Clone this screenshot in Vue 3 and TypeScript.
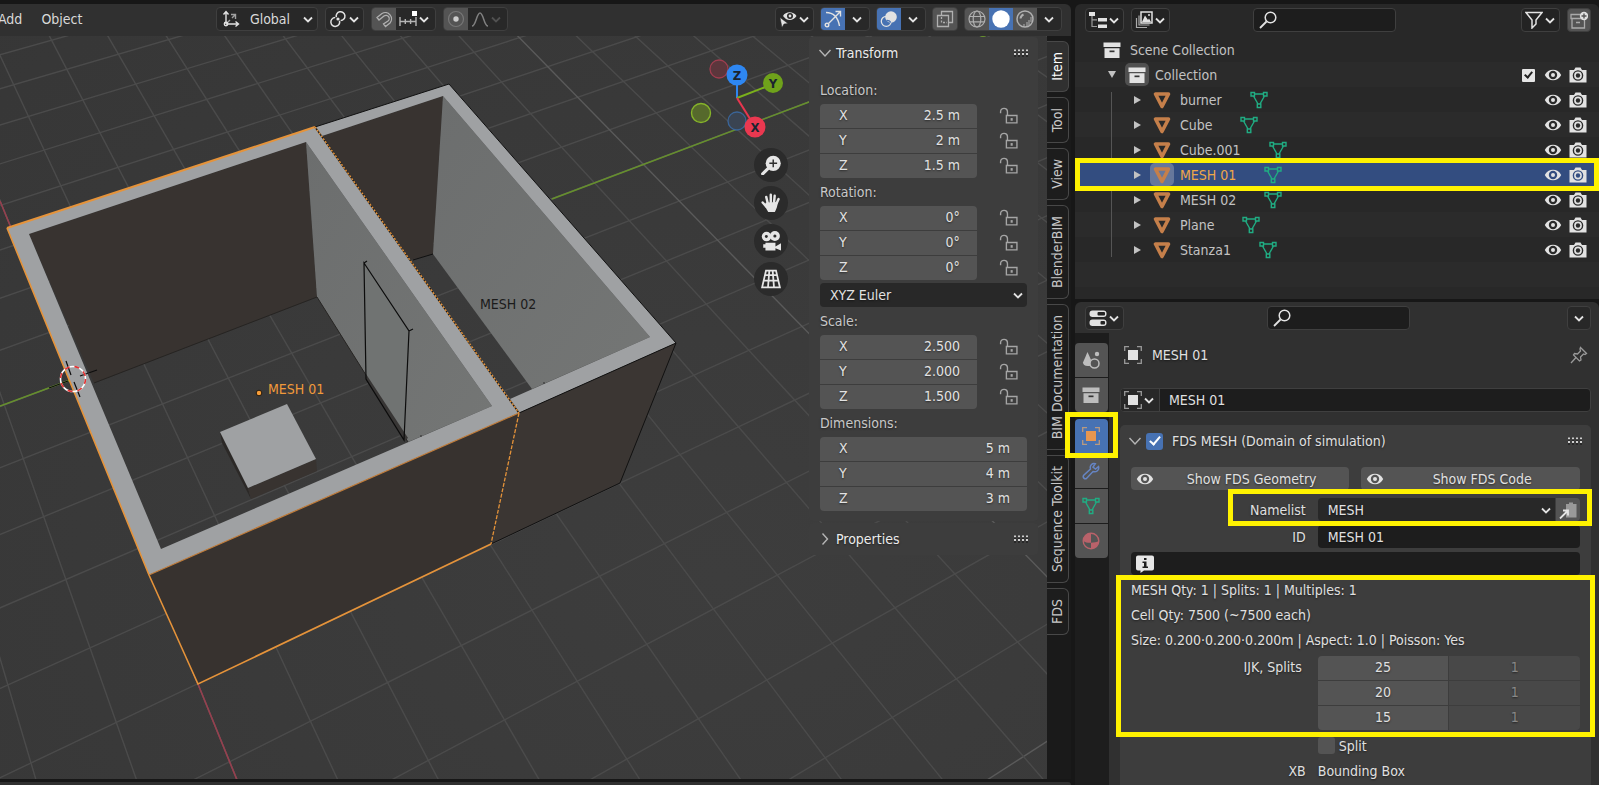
<script setup lang="ts">
import { ref } from 'vue'

const icons: Record<string, string> = {
  chevron: '<path d="M5 7.5l4 4 4-4" fill="none" stroke="currentColor" stroke-width="1.8"/>',
  open: '<path d="M3.500 6l5.500 6 5.500-6" fill="none" stroke="#b5b5b5" stroke-width="1.400"/>',
  closed: '<path d="M6.500 3.500l5 5.500-5 5.500" fill="none" stroke="#b5b5b5" stroke-width="1.400"/>',
  axes: '<g fill="none" stroke="currentColor" stroke-width="1.400"><path d="M4 14V2M1.500 4.500L4 1.500l2.500 3M4 14h12M13.500 11.500l3 2.500-3 2.500"/><path d="M5 13l3-3M10 8l3-3M9 4.500h4.500V9" opacity=".65"/><circle cx="4" cy="14" r="1.700"/></g>',
  pivot: '<g fill="none" stroke="currentColor" stroke-width="1.500"><path d="M7.300 7.300a4.400 4.400 0 1 1 4.400 3.200"/><path d="M10.500 10.800a4.400 4.400 0 1 1-4.400-3.200"/></g><circle cx="9" cy="9" r="1.600" fill="currentColor"/>',
  magnet: '<path d="M2 7.500l5-4a6.300 6.300 0 0 1 8 9.500l-4.500 3.500-2-2.500L13 11a3.200 3.200 0 0 0-4-5L4 10z" fill="none" stroke="currentColor" stroke-width="1.300"/>',
  snap: '<path d="M1 7v9M6.300 9v5M11.600 9v5M17 7v9M1 11.500h16" fill="none" stroke="#b5b5b5" stroke-width="1.400"/><path d="M13 1h5v5h-5z" fill="#fff"/>',
  proportional: '<circle cx="9" cy="9" r="7.500" fill="none" stroke="#777" stroke-width="1.200"/><circle cx="9" cy="9" r="2.700" fill="#ccc"/>',
  falloff: '<path d="M1 16c4 0 4.500-13 8-13s4 13 8 13" fill="none" stroke="currentColor" stroke-width="1.500"/>',
  visibility: '<path d="M4 6c2.500-5 10.500-5 13.500 0-3 5-10 5-12.500 1z" fill="currentColor"/><circle cx="11" cy="6" r="3" fill="#282828"/><circle cx="11" cy="6" r="1.400" fill="currentColor"/><path d="M1 7.500l8 6-4 .5-2 3.500z" fill="currentColor" stroke="#282828" stroke-width=".5"/>',
  gizmo: '<g fill="none" stroke="currentColor" stroke-width="1.400"><path d="M2 2.500c7 0 12 5 13.500 13.500M4.500 13.500L16 2M11.500 1.500H16.500V6.500"/><circle cx="3" cy="15" r="1.800"/></g>',
  overlay: '<circle cx="11" cy="7" r="5.800" fill="currentColor"/><circle cx="6.300" cy="11.300" r="5" fill="none" stroke="currentColor" stroke-width="1.300"/><path d="M6.500 10.500a5 5 0 0 1 4.500 2" fill="none" stroke="#4772b3" stroke-width="1.200"/>',
  xray: '<g fill="none" stroke="currentColor" stroke-width="1.300"><path d="M1.500 5.500h11v11h-11zM5.500 5V1.500h11v11H13"/><path d="M5.500 7v5.500H11" stroke-dasharray="2 1.500"/></g>',
  wire: '<g fill="none" stroke="currentColor" stroke-width="1.200"><circle cx="9" cy="9" r="8"/><ellipse cx="9" cy="9" rx="3.800" ry="8"/><path d="M1.500 6.500h15M1.500 11.800h15"/></g>',
  solid: '<circle cx="9" cy="9" r="8.700" fill="#fff"/>',
  rendered: '<circle cx="9" cy="9" r="8" fill="none" stroke="currentColor" stroke-width="1.500"/><path d="M4.500 8.500a5 5 0 0 1 3-4" fill="none" stroke="currentColor" stroke-width="2"/><path d="M15 7v5M13 10v5M11 12v4M8 14v2.500" stroke="currentColor" stroke-width="1"/>',
  tree: '<path d="M0 1h6v4H0zM9 7h9v3.500H9zM9 13.500h9V17H9z" fill="currentColor"/><path d="M3 5v10.500h5M3 8.800h5" fill="none" stroke="#999" stroke-width="1.200"/>',
  images: '<path d="M1.500 7v9.500H12M4 4.500v9.500h10.500" fill="none" stroke="#aaa" stroke-width="1.200"/><path d="M6 1h11v11H6z" fill="none" stroke="currentColor" stroke-width="1.500"/><path d="M7 11l3-6.500L13 9l1-1.500 2 3.500z" fill="currentColor"/><circle cx="14" cy="4" r="1" fill="currentColor"/>',
  search: '<circle cx="11.500" cy="6.500" r="5.300" fill="none" stroke="currentColor" stroke-width="1.500"/><path d="M7.500 10.500L1 17" stroke="currentColor" stroke-width="1.800"/>',
  filter: '<path d="M1 1.500h16l-6 7.500v4l-4 4V9z" fill="none" stroke="currentColor" stroke-width="1.500"/>',
  newcoll: '<path d="M10 3.500H1v4h11M2 8v9h12.500V9M6 11.500h4" fill="none" stroke="#aaa" stroke-width="1.300"/><circle cx="14" cy="5" r="4.200" fill="#e0e0e0"/><path d="M14 2.500v5M11.500 5h5" stroke="#545454" stroke-width="1.400"/>',
  box: '<path d="M.5 1.500h17v4.500H.5zM1.500 7.300h15V17h-15z" fill="currentColor"/><path d="M6.500 9.500h5v1.700h-5z" fill="#333"/>',
  mesh: '<path d="M2.500 3h13L9 15.500z" fill="none" stroke="#c57f4a" stroke-width="3.600" stroke-linejoin="round"/>',
  data: '<g fill="none" stroke="#20ad83" stroke-width="1.400"><path d="M1 1.500h3.500V5H1zM13.500 1.500H17V5h-3.500zM7.300 13h3.500v3.500H7.300zM4.500 3h9M3.500 5l4.500 8M14.500 5L10 13"/></g>',
  eye: '<path d="M.8 9C4 2 14 2 17.200 9 14 16 4 16 .8 9z" fill="currentColor"/><circle cx="9" cy="9" r="4.200" fill="var(--hole,#2a2a2a)"/><circle cx="9" cy="9" r="2" fill="currentColor"/>',
  camera: '<path d="M.5 4H5l1.500-2.500h5L13 4h4.500v12.500H.5z" fill="currentColor"/><circle cx="9" cy="9.500" r="4.600" fill="none" stroke="var(--hole,#2a2a2a)" stroke-width="1.400"/><circle cx="9" cy="9.500" r="2.200" fill="var(--hole,#2a2a2a)"/>',
  toggles: '<rect x=".5" y="1.500" width="17" height="6.500" rx="3" fill="currentColor"/><rect x="8.500" y="3" width="7.500" height="3.500" rx="1" fill="#222"/><rect x=".5" y="10.500" width="17" height="6.500" rx="3" fill="currentColor"/><rect x="11.500" y="12" width="4.500" height="3.500" rx="1" fill="#222"/>',
  object: '<path d="M.7 5V.7H5M13 .7h4.300V5M17.300 13v4.300H13M5 17.300H.7V13" fill="none" stroke="var(--frame,#999)" stroke-width="1.300"/><path d="M4 4h10v10H4z" fill="currentColor"/>',
  pin: '<path d="M10.500 1.500l6 6-1.500 1-1.500-.5-3 3 .5 3-1.500 1L3.500 9 4.500 7.500l3 .5 3-3-.5-2zM6 11.500L1 17" fill="none" stroke="currentColor" stroke-width="1.300"/>',
  scene: '<path d="M5.500 1L10 11a4 4 0 0 1-1 3.500C4 16 .8 14 1 11.500z" fill="currentColor"/><circle cx="15" cy="3" r="2.200" fill="currentColor"/><circle cx="12.500" cy="12.500" r="4.500" fill="#545454" stroke="currentColor" stroke-width="1.500"/>',
  wrench: '<path d="M16.500 4.500l-3 2.500-2.500-2 2.300-3.300C10 .8 7.500 3.500 8.500 7L1.500 13.500c-1 2 1 4 3 3L11 9.500c3.500 1 6.500-1.500 5.500-5z" fill="none" stroke="#6685c4" stroke-width="1.500"/>',
  material: '<circle cx="9" cy="9" r="7.800" fill="none" stroke="#b9626a" stroke-width="1.400"/><path d="M9 1.200A7.800 7.800 0 0 0 1.200 9c2 1.500 5 2 7.800 1.800zM9 10.800c3-.2 6-.8 7.800-1.800A7.800 7.800 0 0 1 9 16.800z" fill="#b9626a"/>',
  info: '<path d="M2 .5h14a2 2 0 0 1 2 2v11a2 2 0 0 1-2 2H8L4.500 18v-2.500H2a2 2 0 0 1-2-2v-11a2 2 0 0 1 2-2z" fill="#e6e6e6"/><path d="M8 3h2.500v2H8zM6.500 6.500h4v5H12V13H6.500v-1.500H8V8H6.500z" fill="#1d1d1d"/>',
  paste: '<path d="M7 3h3V1.500h4V3h3.500v13.500H7z" fill="#999"/><path d="M1 17.500l7-7M4 9.500h5v5" fill="none" stroke="#e6e6e6" stroke-width="1.800"/>',
  lock: '<path d="M1.500 6V4.500a3 3 0 0 1 6.500 0V8M7 8h10v7H7z" fill="none" stroke="#a5a5a5" stroke-width="1.300"/><path d="M11 10.500h2V13h-2z" fill="#a5a5a5"/>',
  zoom: '<circle cx="11" cy="7.500" r="6.800" fill="currentColor"/><path d="M6.500 12L1.500 17" stroke="currentColor" stroke-width="2.800" stroke-linecap="round"/><path d="M11 4v7M7.500 7.500h7" stroke="#2d2d2d" stroke-width="1.300"/>',
  hand: '<g fill="none" stroke="currentColor" stroke-linecap="round" stroke-width="2.200"><path d="M6 9L4.700 3.500M8.800 8V1.600M11.800 8l.5-5.500M14 9.500l1.800-4M5 12.500L1.500 8.500"/></g><path d="M4.500 8.500L15 8c0 3.500-1 6-2.500 9h-6L3 11z" fill="currentColor"/>',
  movie: '<circle cx="5" cy="5" r="4.300" fill="currentColor"/><circle cx="12.500" cy="4.500" r="4.500" fill="currentColor"/><circle cx="4.800" cy="5" r="1.300" fill="#2d2d2d"/><circle cx="12.500" cy="4.500" r="1.400" fill="#2d2d2d"/><path d="M4 10.500h9v7H4zM2 12h2v3H2zM13 14l5-3v6.500l-5-2z" fill="currentColor"/>',
  persp: '<path d="M4.500 1.500h9l3.500 15H1zM3.500 5.500h11M2.500 10.500h13M7.500 1.500L6.300 16.500M10.500 1.500l1.200 15" fill="none" stroke="currentColor" stroke-width="1.600"/>',
  dots: '<path d="M2 6.500h15M2 10h15" stroke="#cfcfcf" stroke-width="2" stroke-dasharray="2 2"/><path d="M2 8h15M2 12h15" stroke="#151515" stroke-width="1" stroke-dasharray="2 2"/>'
}

interface Pt { x: number; y: number }

// Perspective projection of the ground plane onto the viewport.
function ground(x: number, y: number): Pt {
  const w = 1 - 0.03637 * x + 0.018292 * y
  return {
    x: (17.763 * x + 68.797 * y + 73) / w,
    y: (36.08 * x - 18.465 * y + 379) / w
  }
}

function range(from: number, to: number): number[] {
  return Array.from({ length: to - from + 1 }, (_, i) => from + i)
}

const gridLines = [
  ...range(-16, 12).map((x) => ({ a: ground(x, -8), b: ground(x, 40), major: x % 10 === 0 })),
  ...range(-8, 36).map((y) => ({ a: ground(-18, y), b: ground(13, y), major: y % 10 === 0 }))
]

const transform = ref([
  { name: 'Location', values: ['2.5 m', '2 m', '1.5 m'] },
  { name: 'Rotation', values: ['0°', '0°', '0°'] },
  { name: 'Scale', values: ['2.500', '2.000', '1.500'] },
  { name: 'Dimensions', values: ['5 m', '4 m', '3 m'] }
])
const axes = ['X', 'Y', 'Z']
const tabs = ['Item', 'Tool', 'View', 'BlenderBIM', 'BIM Documentation', 'Sequence Toolkit', 'FDS']
const navigation = [
  { icon: 'zoom', label: 'Zoom' },
  { icon: 'hand', label: 'Pan' },
  { icon: 'movie', label: 'Camera view' },
  { icon: 'persp', label: 'Perspective' }
]
const objects = ['burner', 'Cube', 'Cube.001', 'MESH 01', 'MESH 02', 'Plane', 'Stanza1']
const active = ref('MESH 01')
const cells = ref([['25', '1'], ['20', '1'], ['15', '1']])
const id = ref('MESH 01')
const enabled = ref(true)
const split = ref(false)
const inView = ref(true)
</script>

<template>
  <div class="app">
    <div class="left">
      <section class="editor view3d">
        <header class="bar">
          <button class="menu first">Add</button>
          <button class="menu">Object</button>
          <span class="space"></span>
          <div class="group">
            <label class="box orient" aria-label="Transform orientation">
              <svg class="ic" viewBox="0 0 18 18" v-html="icons.axes"></svg>
              <select><option>Global</option></select>
              <svg class="ic" viewBox="0 0 18 18" v-html="icons.chevron"></svg>
            </label>
            <button class="box duo" aria-label="Pivot point">
              <svg class="ic" viewBox="0 0 18 18" v-html="icons.pivot"></svg>
              <svg class="ic chev" viewBox="0 0 18 18" v-html="icons.chevron"></svg>
            </button>
            <div class="box">
              <button class="cell grey dimmed" aria-label="Snap"><svg class="ic" viewBox="0 0 18 18" v-html="icons.magnet"></svg></button>
              <button class="cell wide" aria-label="Snapping options">
                <svg class="ic" viewBox="0 0 18 18" v-html="icons.snap"></svg>
                <svg class="ic chev" viewBox="0 0 18 18" v-html="icons.chevron"></svg>
              </button>
            </div>
            <div class="box">
              <button class="cell grey" aria-label="Proportional editing"><svg class="ic" viewBox="0 0 18 18" v-html="icons.proportional"></svg></button>
              <button class="cell wide off" aria-label="Falloff" disabled>
                <svg class="ic" viewBox="0 0 18 18" v-html="icons.falloff"></svg>
                <svg class="ic chev" viewBox="0 0 18 18" v-html="icons.chevron"></svg>
              </button>
            </div>
          </div>
          <span class="space double"></span>
          <div class="group tight">
            <button class="box duo" aria-label="Object visibility">
              <svg class="ic" viewBox="0 0 18 18" v-html="icons.visibility"></svg>
              <svg class="ic chev" viewBox="0 0 18 18" v-html="icons.chevron"></svg>
            </button>
            <div v-for="k in ['gizmo', 'overlay']" :key="k" class="box">
              <button class="cell blue" :aria-label="k"><svg class="ic" viewBox="0 0 18 18" v-html="icons[k]"></svg></button>
              <button class="cell" :aria-label="k + ' options'"><svg class="ic" viewBox="0 0 18 18" v-html="icons.chevron"></svg></button>
            </div>
            <div class="box">
              <button class="cell grey dimmed" aria-label="X-ray"><svg class="ic" viewBox="0 0 18 18" v-html="icons.xray"></svg></button>
            </div>
            <div class="box">
              <button class="cell grey dimmed" aria-label="Wireframe"><svg class="ic" viewBox="0 0 18 18" v-html="icons.wire"></svg></button>
              <button class="cell blue" aria-label="Solid"><svg class="ic" viewBox="0 0 18 18" v-html="icons.solid"></svg></button>
              <button class="cell grey dimmed" aria-label="Rendered"><svg class="ic" viewBox="0 0 18 18" v-html="icons.rendered"></svg></button>
              <button class="cell" aria-label="Shading options"><svg class="ic" viewBox="0 0 18 18" v-html="icons.chevron"></svg></button>
            </div>
          </div>
        </header>

        <div class="stage">
          <div class="viewport">
            <svg class="scene" viewBox="0 36 1047 743" preserveAspectRatio="xMinYMin slice">
              <defs>
                <radialGradient id="ground" cx=".45" cy=".45" r=".7">
                  <stop offset="0" stop-color="#3d3d3d" />
                  <stop offset="1" stop-color="#363636" />
                </radialGradient>
                <linearGradient id="inner" x1="0" y1="0" x2="1" y2="1">
                  <stop offset="0" stop-color="#6c6e6e" />
                  <stop offset="1" stop-color="#747675" />
                </linearGradient>
              </defs>
              <rect x="0" y="36" width="1600" height="1200" fill="url(#ground)" />
              <line
                v-for="(l, i) in gridLines" :key="i"
                :x1="l.a.x" :y1="l.a.y" :x2="l.b.x" :y2="l.b.y"
                :stroke="l.major ? '#5a5a5a' : '#4b4b4b'" stroke-width="1.400"
              />
              <path d="M0 201L73 379 198 684 237 780" fill="none" stroke="#963f4e" stroke-width="1.600" />
              <path d="M0 406L73 379M552 199L809 102 987 35" fill="none" stroke="#66902c" stroke-width="1.600" />

              <!-- second room -->
              <path d="M322 136L443 96 433 254 410 260z" fill="#383330" />
              <path d="M443 96L650 337 532 389 433 254z" fill="url(#inner)" />
              <path fill-rule="evenodd" d="M315 127L449 84 676 343 519 413zM322 136L510 399 650 337 443 96z" fill="#9fa1a3" />
              <path d="M519 413L676 343 620 483 491 544z" fill="#3b3633" />
              <path d="M315 127L449 84 676 343 519 413M676 343L620 483 491 544M433 254L413 260" fill="none" stroke="#111" stroke-width="1" />

              <!-- first room -->
              <path d="M29 234L306 142 317 297 94 383z" fill="#383330" />
              <path d="M306 142L317 297 408 442 492 406z" fill="url(#inner)" />
              <path d="M317 297L94 383M317 297L408 442" fill="none" stroke="#262422" stroke-width="1" />
              <path d="M364 263L409 331 404 440 366 379z" fill="#707372" />
              <path d="M366 374L408 438 404 441 366 380z" fill="#383635" />
              <path d="M364 263L409 331 404 440 366 379zM364 263l3-2M409 331l4-2" fill="none" stroke="#0c0c0c" stroke-width="1.200" />
              <path fill-rule="evenodd" d="M7 228L315 127 519 413 149 575zM29 234L161 549 492 406 306 142z" fill="#9fa1a3" />
              <path d="M149 575L519 413 491 544 198 684z" fill="#37322f" />
              <circle cx="421" cy="436" r=".7" fill="#111" />
              <circle cx="544" cy="383" r=".7" fill="#111" />

              <!-- burner block -->
              <path d="M220 432L248 488 251 499 222 443z" fill="#2c2927" />
              <path d="M248 488L316 459 317 471 251 499z" fill="#383330" />
              <path d="M220 432L287 404 316 459 248 488z" fill="#9fa1a3" />

              <g fill="none" stroke="#e5933a">
                <path d="M7 228L315 127" stroke-width="2" />
                <path d="M7 228L149 575 198 684 491 544" stroke-width="1.600" />
                <path d="M149 575L519 413" stroke="#c07c3a" stroke-width="1.200" />
                <path d="M315 127L519 413" stroke-width="1.400" stroke="#1c1712" />
                <path d="M315 127L519 413" stroke-width="1.400" stroke-dasharray="2 1.500" />
                <path d="M519 413L491 544" stroke-width="1.300" stroke-dasharray="4 1.500" />
              </g>

              <path d="M66 361l5 14M74 382l6 15M80 376l17-6M49 388l19-7" stroke="#0d0d0d" stroke-width="1.200" />
              <circle cx="73" cy="379" r="12.500" fill="none" stroke="#fff" stroke-width="1.600" />
              <circle cx="73" cy="379" r="12.500" fill="none" stroke="#e23333" stroke-width="1.600" stroke-dasharray="5 5" />

              <circle cx="259" cy="393" r="2.800" fill="#f79d38" stroke="#231a10" />
              <text x="268" y="394" class="name" fill="#f0993a">MESH 01</text>
              <text x="480" y="309" class="name" fill="#1b1b1b">MESH 02</text>
            </svg>

            <div class="floating">
              <div class="tools">
                <svg class="compass" viewBox="690 52 100 92" role="img" aria-label="View orientation">
                  <circle cx="719" cy="69" r="9" fill="#5c363c" stroke="#a03d4f" stroke-width="1.300" />
                  <circle cx="701" cy="113" r="9.500" fill="#56692c" stroke="#86b42a" stroke-width="1.400" />
                  <circle cx="737" cy="121" r="9" fill="#3a4452" stroke="#3a6599" stroke-width="1.300" />
                  <path d="M737 98V80" stroke="#2e85f0" stroke-width="2" />
                  <path d="M737 98L768 86" stroke="#7bb01c" stroke-width="2" />
                  <path d="M737 98L752 122" stroke="#e8364f" stroke-width="2" />
                  <circle cx="737" cy="75" r="10.500" fill="#2e87f2" />
                  <circle cx="773" cy="83" r="10" fill="#6fa21b" />
                  <circle cx="755" cy="127" r="10.500" fill="#ea3850" />
                  <g class="letters"><text x="737" y="80">Z</text><text x="773" y="88">Y</text><text x="755" y="132">X</text></g>
                </svg>
                <button v-for="n in navigation" :key="n.icon" class="nav" :aria-label="n.label">
                  <svg viewBox="0 0 18 18" v-html="icons[n.icon]"></svg>
                </button>
              </div>

              <aside class="npanels">
                <section class="npanel tall">
                  <button class="title">
                    <svg class="ic" viewBox="0 0 18 18" v-html="icons.open"></svg><span>Transform</span>
                    <svg class="ic" viewBox="0 0 18 18" v-html="icons.dots"></svg>
                  </button>
                  <div class="groups">
                    <template v-for="g in transform" :key="g.name">
                      <div class="caption">{{ g.name }}:</div>
                      <div class="trio">
                        <div class="stack">
                          <label v-for="(a, i) in axes" :key="a" class="num">
                            <span>{{ a }}</span><input v-model="g.values[i]" type="text" :aria-label="g.name + ' ' + a" />
                          </label>
                        </div>
                        <div v-if="g.name !== 'Dimensions'" class="locks">
                          <button v-for="a in axes" :key="a" :aria-label="'Lock ' + g.name + ' ' + a">
                            <svg viewBox="0 0 18 18" v-html="icons.lock"></svg>
                          </button>
                        </div>
                      </div>
                      <label v-if="g.name === 'Rotation'" class="drop euler" aria-label="Rotation mode">
                        <select><option>XYZ Euler</option></select>
                        <svg class="ic" viewBox="0 0 18 18" v-html="icons.chevron"></svg>
                      </label>
                    </template>
                  </div>
                </section>
                <section class="npanel">
                  <button class="title">
                    <svg class="ic" viewBox="0 0 18 18" v-html="icons.closed"></svg><span>Properties</span>
                    <svg class="ic" viewBox="0 0 18 18" v-html="icons.dots"></svg>
                  </button>
                </section>
              </aside>
            </div>
          </div>
          <nav class="tabs">
            <button v-for="t in tabs" :key="t" :class="{ on: t === 'Item' }"><span>{{ t }}</span></button>
          </nav>
        </div>
      </section>
      <div class="timeline"></div>
    </div>

    <div class="right">
      <section class="editor outliner">
        <header class="bar">
          <button class="box duo" aria-label="Editor type">
            <svg class="ic" viewBox="0 0 18 18" v-html="icons.tree"></svg>
            <svg class="ic chev" viewBox="0 0 18 18" v-html="icons.chevron"></svg>
          </button>
          <button class="box duo gap" aria-label="Display mode">
            <svg class="ic" viewBox="0 0 18 18" v-html="icons.images"></svg>
            <svg class="ic chev" viewBox="0 0 18 18" v-html="icons.chevron"></svg>
          </button>
          <span class="space two"></span>
          <label class="box find">
            <svg class="ic" viewBox="0 0 18 18" v-html="icons.search"></svg><input type="text" aria-label="Search outliner" />
          </label>
          <span class="space three"></span>
          <button class="box duo" aria-label="Filter">
            <svg class="ic" viewBox="0 0 18 18" v-html="icons.filter"></svg>
            <svg class="ic chev" viewBox="0 0 18 18" v-html="icons.chevron"></svg>
          </button>
          <button class="box solo gap raised" aria-label="New collection"><svg class="ic" viewBox="0 0 18 18" v-html="icons.newcoll"></svg></button>
        </header>
        <div class="rows">
          <div class="row root">
            <svg class="ic" viewBox="0 0 18 18" v-html="icons.box"></svg><span>Scene Collection</span>
          </div>
          <div class="row coll">
            <i class="tri down"></i>
            <span class="chip"><svg class="ic" viewBox="0 0 18 18" v-html="icons.box"></svg></span>
            <span>Collection</span>
            <div class="flags">
              <input v-model="inView" type="checkbox" aria-label="Include collection" />
              <button aria-label="Hide"><svg class="ic" viewBox="0 0 18 18" v-html="icons.eye"></svg></button>
              <button aria-label="Disable in renders"><svg class="ic" viewBox="0 0 18 18" v-html="icons.camera"></svg></button>
            </div>
          </div>
          <div class="children">
            <div v-for="o in objects" :key="o" class="row child" :class="{ active: o === active }" @click="active = o">
              <i class="tri"></i>
              <span class="chip"><svg class="ic" viewBox="0 0 18 18" v-html="icons.mesh"></svg></span>
              <span>{{ o }}</span>
              <svg class="ic mesh" viewBox="0 0 18 18" v-html="icons.data"></svg>
              <div class="flags">
                <button aria-label="Hide"><svg class="ic" viewBox="0 0 18 18" v-html="icons.eye"></svg></button>
                <button aria-label="Disable in renders"><svg class="ic" viewBox="0 0 18 18" v-html="icons.camera"></svg></button>
              </div>
            </div>
          </div>
        </div>
      </section>

      <section class="editor props">
        <header class="bar">
          <button class="box duo" aria-label="Editor type">
            <svg class="ic" viewBox="0 0 18 18" v-html="icons.toggles"></svg>
            <svg class="ic chev" viewBox="0 0 18 18" v-html="icons.chevron"></svg>
          </button>
          <span class="space ten"></span>
          <label class="box find">
            <svg class="ic" viewBox="0 0 18 18" v-html="icons.search"></svg><input type="text" aria-label="Search properties" />
          </label>
          <span class="space eleven"></span>
          <button class="box solo" aria-label="Options"><svg class="ic" viewBox="0 0 18 18" v-html="icons.chevron"></svg></button>
        </header>
        <div class="body">
          <nav class="contexts">
            <button class="top" aria-label="World"><svg class="ic" viewBox="0 0 18 18" v-html="icons.scene"></svg></button>
            <button class="end" aria-label="Collection"><svg class="ic" viewBox="0 0 18 18" v-html="icons.box"></svg></button>
            <button class="top current marked" aria-label="Object"><svg class="ic" viewBox="0 0 18 18" v-html="icons.object"></svg></button>
            <button aria-label="Modifiers"><svg class="ic" viewBox="0 0 18 18" v-html="icons.wrench"></svg></button>
            <button aria-label="Data"><svg class="ic" viewBox="0 0 18 18" v-html="icons.data"></svg></button>
            <button class="end" aria-label="Material"><svg class="ic" viewBox="0 0 18 18" v-html="icons.material"></svg></button>
          </nav>
          <div class="content">
            <div class="crumb">
              <svg class="ic" viewBox="0 0 18 18" v-html="icons.object"></svg><span>MESH 01</span>
              <button aria-label="Pin"><svg class="ic" viewBox="0 0 18 18" v-html="icons.pin"></svg></button>
            </div>
            <div class="box idrow">
              <button class="duo" aria-label="Browse object">
                <svg class="ic" viewBox="0 0 18 18" v-html="icons.object"></svg>
                <svg class="ic chev" viewBox="0 0 18 18" v-html="icons.chevron"></svg>
              </button>
              <input v-model="active" type="text" aria-label="Object name" />
            </div>
            <section class="panel">
              <div class="phead">
                <svg class="ic" viewBox="0 0 18 18" v-html="icons.open"></svg>
                <label><input v-model="enabled" type="checkbox" class="tick" /><span>FDS MESH (Domain of simulation)</span></label>
                <svg class="ic" viewBox="0 0 18 18" v-html="icons.dots"></svg>
              </div>
              <div class="pair">
                <button class="wide-btn"><svg class="ic" viewBox="0 0 18 18" v-html="icons.eye"></svg><span>Show FDS Geometry</span></button>
                <button class="wide-btn"><svg class="ic" viewBox="0 0 18 18" v-html="icons.eye"></svg><span>Show FDS Code</span></button>
              </div>
              <div class="form namelist marked">
                <label for="namelist">Namelist</label>
                <div class="join">
                  <span class="drop">
                    <select id="namelist"><option>MESH</option></select>
                    <svg class="ic" viewBox="0 0 18 18" v-html="icons.chevron"></svg>
                  </span>
                  <button aria-label="Copy"><svg class="ic" viewBox="0 0 18 18" v-html="icons.paste"></svg></button>
                </div>
              </div>
              <div class="form">
                <label for="fds-id">ID</label>
                <input id="fds-id" v-model="id" type="text" class="dark" />
              </div>
              <label class="note dark">
                <svg class="ic" viewBox="0 0 18 18" v-html="icons.info"></svg><input type="text" aria-label="Description" />
              </label>
              <div class="summary marked">
                <p>MESH Qty: 1 | Splits: 1 | Multiples: 1</p>
                <p>Cell Qty: 7500 (~7500 each)</p>
                <p>Size: 0.200·0.200·0.200m | Aspect: 1.0 | Poisson: Yes</p>
                <div class="form ijk">
                  <span class="lab">IJK, Splits</span>
                  <div class="cells">
                    <template v-for="(r, i) in cells" :key="i">
                      <input v-model="r[0]" type="text" :aria-label="'Cells ' + axes[i]" />
                      <input v-model="r[1]" type="text" disabled :aria-label="'Splits ' + axes[i]" />
                    </template>
                  </div>
                </div>
              </div>
              <div class="form split">
                <span></span>
                <label><input v-model="split" type="checkbox" class="tick" /><span>Split</span></label>
              </div>
              <div class="form"><span class="lab">XB</span><span>Bounding Box</span></div>
            </section>
          </div>
        </div>
      </section>
    </div>
  </div>
</template>

<style>
body {
  margin: 0;
  background: #161616;
  overflow: hidden;
}
</style>

<style scoped>
.app {
  height: 100vh;
  box-sizing: border-box;
  padding-top: 4px;
  display: grid;
  grid-template-columns: 47fr 23fr;
  gap: 4px;
  color: #d9d9d9;
  font: 14px/18px "DejaVu Sans Condensed", "DejaVu Sans", sans-serif;
  background: #171717;
}
button, input, select {
  font: inherit;
  color: inherit;
  background: none;
  border: 0;
  margin: 0;
  padding: 0;
  min-width: 0;
  outline: 0;
  box-sizing: border-box;
  text-shadow: inherit;
}
button {
  display: flex;
  align-items: center;
  justify-content: center;
}
select {
  appearance: none;
  opacity: 1;
}
.ic {
  width: 18px;
  height: 18px;
  flex: none;
  color: #e2e2e2;
}
.left, .right {
  display: flex;
  flex-direction: column;
  min-width: 0;
  min-height: 0;
  gap: 3px;
}
.editor {
  background: #303030;
  border-radius: 6px 6px 0 0;
}
.view3d {
  flex: 1;
  min-height: 0;
  display: flex;
  flex-direction: column;
  border-top-left-radius: 0;
}
.timeline {
  height: 3px;
  background: #303030;
  border-top-right-radius: 4px;
}

/* header bars */
.bar {
  flex: none;
  display: flex;
  align-items: center;
  height: 31px;
  padding: 0 8px 0 10px;
}
.view3d > .bar {
  height: 30px;
  padding: 0 9px 2px 0;
}
.menu.first {
  margin-left: -2px;
}
.menu + .menu {
  margin-left: 19px;
}
.space {
  flex: 1;
}
.space.double, .space.two {
  flex: 2;
}
.space.three {
  flex: 3;
}
.space.ten {
  flex: 10;
}
.space.eleven {
  flex: 11;
}
.group {
  display: flex;
  gap: 7px;
}
.group.tight {
  gap: 6px;
}
.box {
  display: flex;
  align-items: center;
  height: 24px;
  box-sizing: border-box;
  border: 1px solid #3f3f3f;
  border-radius: 4px;
  background: #282828;
  overflow: hidden;
}
.duo {
  width: 39px;
  padding-left: 3px;
}
.chev {
  margin-left: -2px;
}
.gap {
  margin-left: 7px;
}
.solo {
  width: 24px;
}
.raised {
  background: #545454;
}
.orient {
  width: 102px;
  padding: 0 0 0 5px;
}
.orient select {
  flex: 1;
  padding-left: 10px;
}
.cell {
  width: 24px;
  height: 24px;
}
.cell.wide {
  width: 39px;
  padding-left: 2px;
}
.grey {
  background: #545454;
}
.dimmed .ic {
  color: #b0b0b0;
}
.off .ic {
  color: #808080;
}
.off .chev {
  color: #505050;
}
.blue {
  background: #4772b3;
}
.find {
  width: 143px;
  background: #1d1d1d;
  padding-left: 5px;
}
.find input {
  flex: 1;
}

/* viewport */
.stage {
  flex: 1;
  min-height: 0;
  display: flex;
  background: #1a1a1a;
}
.viewport {
  flex: 1;
  position: relative;
  overflow: hidden;
}
.scene {
  position: absolute;
  inset: 0;
  width: 100%;
  height: 100%;
}
.name {
  font-size: 14px;
}
.floating {
  position: relative;
  display: flex;
  justify-content: flex-end;
  gap: 19px;
  padding: 1px 9px 0 0;
}
.tools {
  width: 100px;
  display: flex;
  flex-direction: column;
  align-items: flex-end;
  gap: 4px;
  padding-top: 15px;
}
.compass {
  width: 100px;
  height: 92px;
}
.nav {
  width: 34px;
  height: 34px;
  margin-right: 2px;
  border-radius: 17px;
  background: #2b2b2b;
  color: #e6e6e6;
}
.nav svg {
  width: 20px;
  height: 20px;
}
.letters {
  font-size: 13px;
  font-weight: bold;
  text-anchor: middle;
  fill: #1a2430;
}
.npanels {
  width: 229px;
  display: flex;
  flex-direction: column;
  gap: 2px;
  text-shadow: 0 1px 2px rgba(0, 0, 0, 0.5);
}
.npanel {
  background: #3d3d3d;
  border-radius: 4px;
}
.npanel.tall {
  padding-bottom: 10px;
}
.title {
  width: 100%;
  height: 32px;
  padding: 0 8px 0 7px;
  color: #ececec;
}
.title span {
  flex: 1;
  text-align: left;
  padding-left: 2px;
}
.groups {
  padding: 7px 11px 0;
}
.caption {
  line-height: 28px;
  color: #c8c8c8;
}
.trio {
  display: flex;
}
.stack {
  flex: 1;
  min-width: 0;
  display: grid;
  gap: 1px;
  border-radius: 4px;
  overflow: hidden;
}
.num {
  display: flex;
  align-items: center;
  min-width: 0;
  height: 24px;
  padding: 0 17px 3px 19px;
  box-sizing: border-box;
  background: #545454;
  color: #e2e2e2;
}
.num input {
  flex: 1;
  width: 0;
  text-align: right;
}
.locks {
  display: grid;
  gap: 1px;
  padding: 0 9px 0 22px;
}
.locks button {
  width: 19px;
  height: 24px;
}
.locks svg {
  width: 19px;
  height: 19px;
}
.drop {
  display: flex;
  align-items: center;
  background: #282828;
  color: #e2e2e2;
  border-radius: 4px;
}
.drop select {
  flex: 1;
  height: 100%;
  padding-left: 10px;
}
.euler {
  height: 24px;
  margin-top: 3px;
}
.tabs {
  width: 24px;
  display: flex;
  flex-direction: column;
  align-items: flex-start;
  gap: 5px;
  padding-top: 5px;
}
.tabs button {
  width: 22px;
  padding: 10px 0;
  border: 1px solid #484848;
  border-left: 0;
  border-radius: 0 6px 6px 0;
  background: #1d1d1d;
  color: #c8c8c8;
}
.tabs button.on {
  background: #303030;
  color: #fff;
}
.tabs span {
  writing-mode: vertical-rl;
  transform: rotate(180deg);
}

/* outliner */
.outliner {
  background: #282828;
  flex: none;
}
.outliner .box {
  background: #232323;
}
.outliner .find {
  background: #1d1d1d;
}
.outliner .raised {
  background: #545454;
}
.rows {
  margin-top: 2px;
  padding-bottom: 37px;
  background: repeating-linear-gradient(#282828 0 25px, #2b2b2b 25px 50px);
  color: #c2c2c2;
}
.row {
  position: relative;
  display: flex;
  align-items: center;
  height: 25px;
}
.root {
  padding-left: 28px;
}
.root span {
  padding-left: 9px;
}
.coll {
  padding-left: 33px;
}
.child {
  padding-left: 59px;
}
.tri {
  width: 0;
  height: 0;
  border-left: 7px solid #c2c2c2;
  border-top: 4px solid transparent;
  border-bottom: 4px solid transparent;
}
.tri.down {
  border-left: 4px solid transparent;
  border-right: 4px solid transparent;
  border-top: 7px solid #c2c2c2;
  border-bottom: 0;
}
.chip {
  width: 24px;
  height: 23px;
  display: grid;
  place-items: center;
  border-radius: 5px;
  margin: 0 6px 0 9px;
}
.coll .chip {
  background: #505050;
}
.mesh {
  margin-left: 28px;
}
.flags {
  margin-left: auto;
  display: flex;
  padding-right: 9px;
}
.flags button {
  width: 25px;
}
.flags input {
  appearance: none;
  width: 13px;
  height: 13px;
  margin: 3px 5px 0;
  border-radius: 1px;
  background: #e6e6e6;
}
.flags input:checked::after {
  content: "";
  display: block;
  width: 3px;
  height: 6px;
  margin: 1px 0 0 4px;
  border: solid #222;
  border-width: 0 2px 2px 0;
  transform: rotate(40deg);
}
.children {
  background: linear-gradient(#555, #555) 36px 5px / 1px 165px no-repeat;
}
.active {
  background: #334d80;
  color: #efa649;
  --hole: #334d80;
}
.active .chip {
  background: #66779b;
}
.active::after, .marked::after {
  content: "";
  position: absolute;
  border: 5px solid #fff200;
  pointer-events: none;
  z-index: 2;
}
.active::after {
  inset: -4px 0;
}

/* properties editor */
.props {
  flex: 1;
  min-height: 0;
  display: flex;
  flex-direction: column;
}
.body {
  flex: 1;
  display: flex;
}
.contexts {
  width: 34px;
  display: flex;
  flex-direction: column;
  gap: 1px;
  padding-top: 10px;
  background: #1d1d1d;
}
.contexts button {
  position: relative;
  width: 33px;
  height: 34px;
  background: #545454;
}
.contexts .ic {
  color: #bdbdbd;
}
.contexts .top {
  border-radius: 4px 4px 0 0;
}
.contexts .end {
  border-radius: 0 0 4px 4px;
  margin-bottom: 6px;
}
.contexts .current {
  background: #4772b3;
  --frame: #b99a80;
}
.contexts .current .ic {
  color: #e69650;
}
.contexts .marked::after {
  inset: -7px -10px -5px -10px;
}
.content {
  flex: 1;
  min-width: 0;
  padding: 0 8px 0 11px;
  color: #e0e0e0;
  text-shadow: 0 1px 2px rgba(0, 0, 0, 0.5);
}
.crumb {
  display: flex;
  align-items: center;
  height: 44px;
  padding: 0 3px 0 4px;
}
.crumb span {
  flex: 1;
  padding-left: 10px;
}
.crumb button .ic {
  color: #9a9a9a;
}
.idrow {
  margin: 11px 0 13px;
  background: #1d1d1d;
}
.idrow .duo {
  height: 24px;
  border-right: 1px solid #3f3f3f;
  background: #282828;
}
.idrow input {
  flex: 1;
  padding-left: 9px;
}
.panel {
  background: #3d3d3d;
  border-radius: 5px 5px 0 0;
  padding: 0 11px 8px;
}
.phead {
  display: flex;
  align-items: center;
  height: 32px;
  margin: 0 -4px 10px -5px;
}
.phead label {
  flex: 1;
  display: flex;
  align-items: center;
  gap: 9px;
  padding-left: 2px;
}
.tick {
  appearance: none;
  width: 17px;
  height: 17px;
  border-radius: 3px;
  background: #545454;
}
.tick:checked {
  background: #4772b3;
}
.tick:checked::after {
  content: "";
  display: block;
  width: 4px;
  height: 9px;
  margin: 1px 0 0 6px;
  border: solid #fff;
  border-width: 0 2px 2px 0;
  transform: rotate(40deg);
}
.pair {
  display: grid;
  grid-template-columns: 1fr 1fr;
  gap: 12px;
  margin-bottom: 8px;
}
.wide-btn {
  height: 23px;
  padding-left: 5px;
  border-radius: 4px;
  background: #545454;
  --hole: #545454;
}
.wide-btn span {
  flex: 1;
}
.form {
  position: relative;
  display: grid;
  grid-template-columns: 2fr 3fr;
  column-gap: 12px;
  align-items: center;
  min-height: 23px;
  margin-bottom: 4px;
}
.form > label:first-child, .lab {
  text-align: right;
}
.namelist::after {
  inset: -9px -12px -5px 97px;
}
.join {
  display: flex;
  gap: 1px;
}
.join .drop {
  flex: 1;
  height: 23px;
  border-radius: 4px 0 0 4px;
}
.join button {
  width: 24px;
  height: 23px;
  background: #545454;
  border-radius: 0 4px 4px 0;
}
.dark {
  height: 23px;
  border-radius: 4px;
  background: #1d1d1d;
}
input.dark {
  padding-left: 10px;
}
.note {
  display: flex;
  align-items: center;
  padding-left: 5px;
}
.note input {
  flex: 1;
}
.summary {
  position: relative;
  padding-top: 3px;
}
.summary::after {
  inset: 0 -15px -7px;
}
.summary p {
  margin: 0;
  line-height: 25px;
}
.ijk {
  align-items: start;
  margin: 3px 0 7px;
}
.ijk .lab {
  line-height: 23px;
  padding-right: 4px;
}
.cells {
  display: grid;
  grid-template-columns: 1fr 1fr;
  gap: 1px;
  border-radius: 4px;
  overflow: hidden;
}
.cells input {
  height: 24px;
  padding-bottom: 2px;
  text-align: center;
  background: #545454;
}
.cells input:disabled {
  background: #484848;
  color: #888;
}
.split {
  min-height: 17px;
  margin-bottom: 5px;
}
.split label {
  display: flex;
  align-items: center;
  gap: 4px;
  height: 17px;
}
</style>
